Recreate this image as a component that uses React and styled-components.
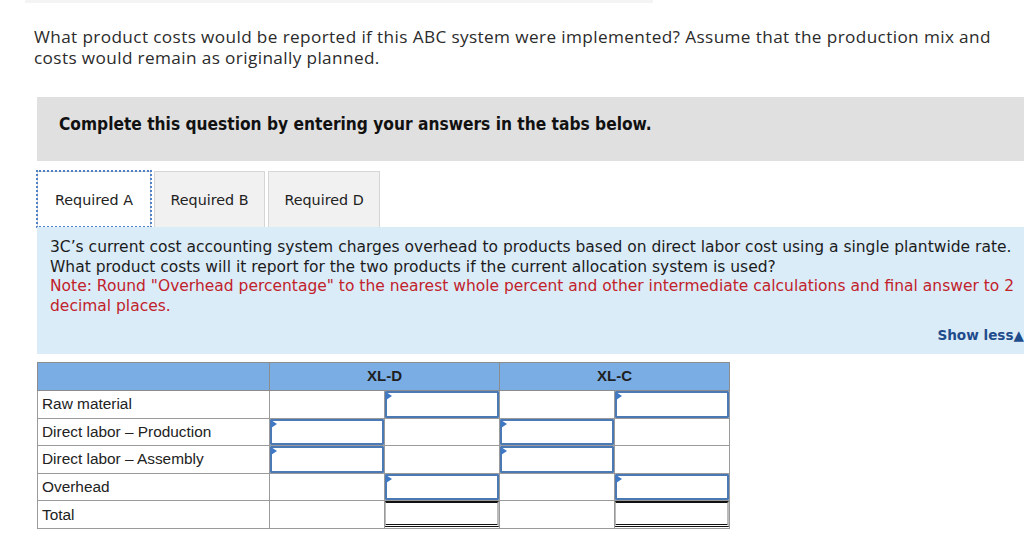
import React from "react";
import styled, { createGlobalStyle } from "styled-components";

const GlobalStyle = createGlobalStyle`
  body {
    margin: 0;
    background: #fff;
    width: 1024px;
    overflow: hidden;
  }
`;

const rows = [
  { label: "Raw material", inputs: [1, 3] },
  { label: "Direct labor \u2013 Production", inputs: [0, 2] },
  { label: "Direct labor \u2013 Assembly", inputs: [0, 2] },
  { label: "Overhead", inputs: [1, 3] },
  { label: "Total", inputs: [1, 3], total: true },
];

function App() {
  return (
    <Page>
      <GlobalStyle />
      <TopStrip />
      <Question>
        What product costs would be reported if this ABC system were implemented? Assume that the production mix and
        <br />
        costs would remain as originally planned.
      </Question>

      <Banner>Complete this question by entering your answers in the tabs below.</Banner>

      <Tabs>
        <Tab $active>Required A</Tab>
        <Tab>Required B</Tab>
        <Tab>Required D</Tab>
      </Tabs>

      <Panel>
        <p>
          3C’s current cost accounting system charges overhead to products based on direct labor cost using a single plantwide rate.
          <br />
          What product costs will it report for the two products if the current allocation system is used?
        </p>
        <Note>
          Note: Round "Overhead percentage" to the nearest whole percent and other intermediate calculations and final answer to 2
          <br />
          decimal places.
        </Note>
        <ShowLess>Show less▲</ShowLess>
      </Panel>

      <Table>
        <thead>
          <tr>
            <HeadCell />
            <HeadCell colSpan={2}>XL-D</HeadCell>
            <HeadCell colSpan={2}>XL-C</HeadCell>
          </tr>
        </thead>
        <tbody>
          {rows.map((row) => (
            <tr key={row.label}>
              <LabelCell>{row.label}</LabelCell>
              {[0, 1, 2, 3].map((i) => (
                <Cell key={i}>
                  {row.inputs.includes(i) &&
                    (row.total ? <TotalBox /> : <InputBox />)}
                </Cell>
              ))}
            </tr>
          ))}
        </tbody>
      </Table>
    </Page>
  );
}

export default App;

const Page = styled.div`
  width: 1024px;
  height: 536px;
  overflow: hidden;
  padding-left: 37px;
  box-sizing: border-box;
`;

const TopStrip = styled.div`
  margin-left: -12px;
  width: 628px;
  height: 3px;
  background: #f4f4f4;
`;

const Question = styled.p`
  margin: 23px 0 0 -3px;
  font-family: "Open Sans", Lato, sans-serif;
  font-size: 17.2px;
  letter-spacing: 0.38px;
  line-height: 21px;
  color: #2b2b2b;
  white-space: nowrap;
`;

const Banner = styled.div`
  margin-top: 29px;
  height: 64px;
  width: 1000px;
  background: #e0e0e0;
  display: flex;
  align-items: center;
  padding: 0 0 10px 22px;
  box-sizing: border-box;
  font-family: "DejaVu Sans Condensed", "DejaVu Sans", sans-serif;
  font-weight: bold;
  font-size: 17.2px;
  color: #111;
`;

const Tabs = styled.div`
  display: flex;
  gap: 3px;
  margin-top: 10px;
  height: 56px;
  align-items: flex-end;
`;

const Tab = styled.div`
  height: 56px;
  display: flex;
  align-items: center;
  box-sizing: border-box;
  font-family: "DejaVu Sans", Verdana, sans-serif;
  font-size: 14.3px;
  color: #222;
  background: ${(p) => (p.$active ? "#fff" : "#f1f1f1")};
  border: 1px solid #d6d6d6;
  border-bottom: none;
  padding: ${(p) => (p.$active ? "0 17px 0 17px" : "0 15.5px")};
  outline: ${(p) => (p.$active ? "2px dotted #4f82c7" : "none")};
  outline-offset: -1px;
`;

const Panel = styled.div`
  width: 1000px;
  height: 127px;
  background: #dbecf9;
  padding: 11px 0 0 13px;
  box-sizing: border-box;
  font-family: "DejaVu Sans", Verdana, sans-serif;
  font-size: 15.5px;
  line-height: 19.7px;
  color: #1c1c1c;
  position: relative;
  white-space: nowrap;

  p {
    margin: 0;
  }
`;

const Note = styled.p`
  color: #c1222b;
`;

const ShowLess = styled.div`
  position: absolute;
  right: 13px;
  top: 99px;
  font-weight: bold;
  font-size: 13.6px;
  color: #1f4d8b;
`;

const Table = styled.table`
  margin-top: 8px;
  border-collapse: collapse;
  font-family: "Liberation Sans", Arial, sans-serif;
  font-size: 15.4px;
  color: #222;
  border: 1px solid #999;
`;

const HeadCell = styled.th`
  background: #79ade3;
  height: 28px;
  border: 1px solid #8c8c8c;
  font-weight: bold;
  font-size: 15px;
  line-height: 16px;
  color: #1f1f1f;
  padding: 0 0 1px;
  box-sizing: border-box;
`;

const LabelCell = styled.td`
  width: 227px;
  height: 26.6px;
  border: 1px solid #9a9a9a;
  padding: 0 0 0 4px;
  white-space: nowrap;
`;

const Cell = styled.td`
  width: 114px;
  height: 26.6px;
  border: 1px solid #9a9a9a;
  padding: 0;
  position: relative;
`;

const InputBox = styled.div`
  position: absolute;
  inset: 0;
  border: 2px solid #4b79b5;
  border-radius: 1px;
  background: #fff;

  &::before {
    content: "";
    position: absolute;
    left: -1px;
    top: -1px;
    border-left: 6px solid #3f78c4;
    border-top: 4px solid transparent;
    border-bottom: 4px solid transparent;
  }
`;

const TotalBox = styled.div`
  position: absolute;
  inset: 0 0 1px 0;
  border-top: 2px solid #111;
  border-left: 1px solid #bbb;
  border-right: 2px solid #bbb;
  border-bottom: 3px double #111;
  background: #fff;
`;
